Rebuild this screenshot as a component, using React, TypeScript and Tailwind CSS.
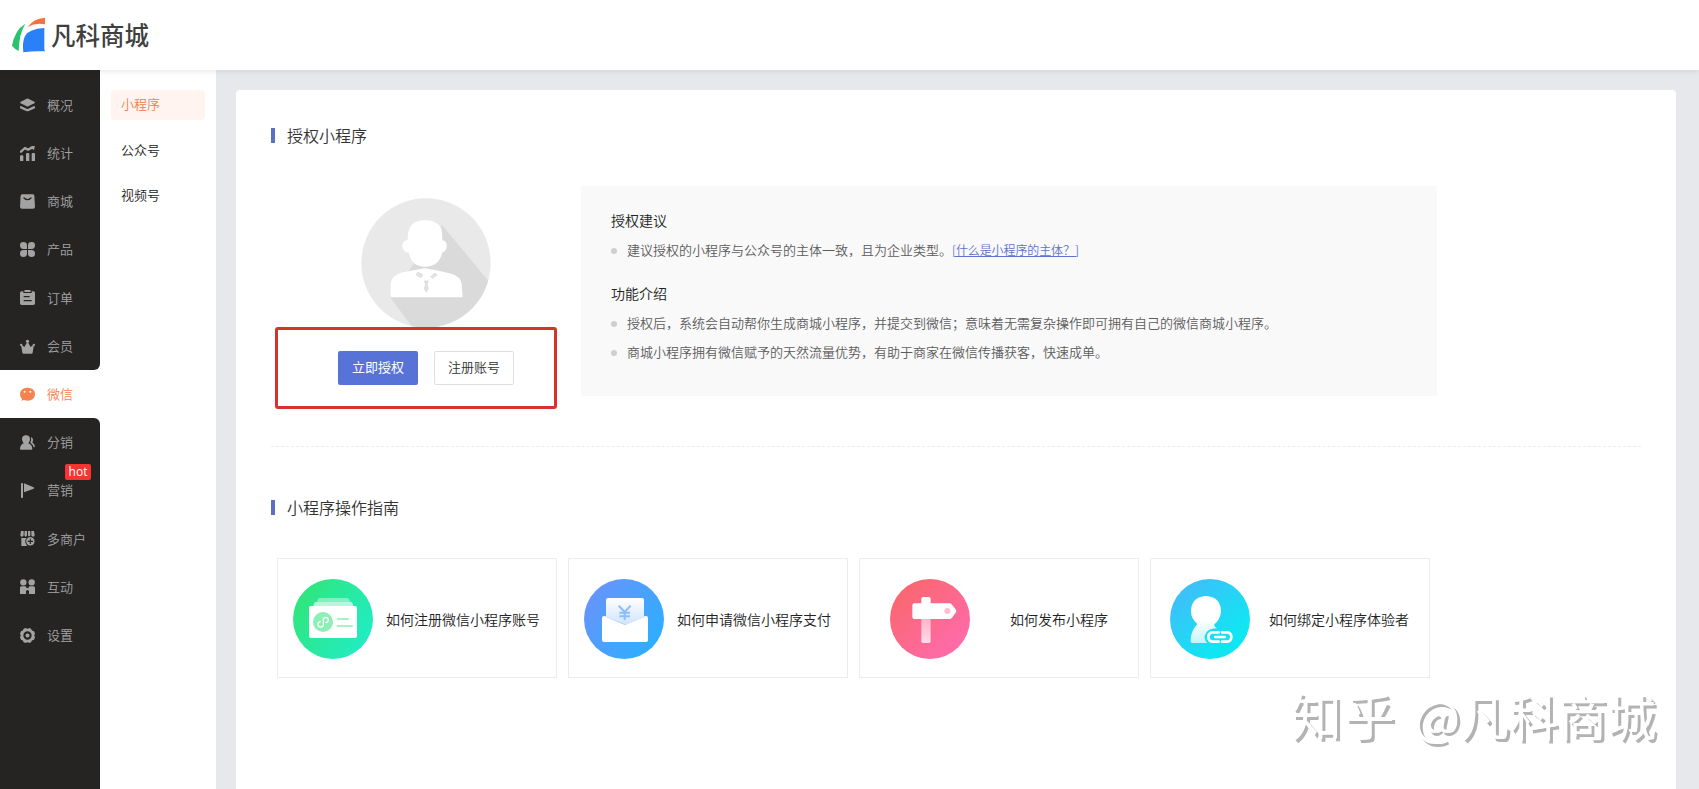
import type { ReactNode } from "react";

type NavItem = {
  label: string;
  icon: ReactNode;
  badge?: string;
};

const topNav: NavItem[] = [
  {
    label: "概况",
    icon: (
      <>
        <path d="M20 2 Q22.500 1 25 2 L43 11 Q46 14 43 16 L25 25 Q22.500 26 20 25 L2 16 Q-1 14 2 11Z" />
        <path d="M3 28 L20 36 Q22.500 37 25 36 L42 28" fill="none" stroke="currentColor" strokeWidth="7" strokeLinecap="round" />
      </>
    ),
  },
  {
    label: "统计",
    icon: (
      <>
        <path d="M3 17 L15 6 L24 11 L40 3" fill="none" stroke="currentColor" strokeWidth="7" strokeLinecap="round" strokeLinejoin="round" />
        <path d="M30 2 L44 0 L42 13Z" />
        <rect x="0" y="28" width="10" height="18" rx="3" />
        <rect x="18" y="21" width="10" height="25" rx="3" />
        <rect x="35" y="21" width="10" height="25" rx="3" />
      </>
    ),
  },
  {
    label: "商城",
    icon: (
      <>
        <path d="M7 1 H38 Q42 1 43 5 L45 38 Q45 44 39 44 H6 Q0 44 0 38 L2 5 Q3 1 7 1Z" />
        <path d="M12 12 Q22.500 22 33 12" fill="none" stroke="#252423" strokeWidth="4" strokeLinecap="round" />
      </>
    ),
  },
  {
    label: "产品",
    icon: (
      <>
        <path d="M10 0 Q21 0 21 10 V21 H10 Q0 21 0 10 Q0 0 10 0Z" />
        <path d="M35 0 Q45 0 45 10 Q45 21 35 21 H24 V10 Q24 0 35 0Z" />
        <path d="M10 24 H21 V35 Q21 45 10 45 Q0 45 0 35 Q0 24 10 24Z" />
        <path d="M24 24 H35 Q45 24 45 35 Q45 45 35 45 Q24 45 24 35Z" />
      </>
    ),
  },
  {
    label: "订单",
    icon: (
      <>
        <path d="M5 4 H10 V9 H35 V4 H40 Q45 4 45 9 V40 Q45 45 40 45 H5 Q0 45 0 40 V9 Q0 4 5 4Z" />
        <rect x="13" y="0" width="19" height="6" rx="2" />
        <path d="M11 20 H29 M11 32 H35" stroke="#252423" strokeWidth="4" />
      </>
    ),
  },
  {
    label: "会员",
    icon: (
      <>
        <path d="M3 16 L13 24 L20 12 H25 L32 24 L42 16 L38 41 Q37 44 34 44 H11 Q8 44 7 41Z" />
        <circle cx="22.500" cy="7" r="5" />
        <circle cx="3.500" cy="18" r="3.500" />
        <circle cx="41.500" cy="18" r="3.500" />
      </>
    ),
  },
];

const activeNav: NavItem = {
  label: "微信",
  icon: (
    <>
      <path d="M22 2 Q45 3 45 22 Q44 41 22 41 L11 39 L5 42 L6 36 Q0 30 0 22 Q1 3 22 2Z" />
      <circle cx="14" cy="14" r="3" fill="#fff" />
      <circle cx="31" cy="14" r="3" fill="#fff" />
    </>
  ),
};

const bottomNav: NavItem[] = [
  {
    label: "分销",
    icon: (
      <>
        <path d="M18 1 Q30 1 30 13 Q30 20 25 25 Q36 29 37 41 Q37 44 34 44 H3 Q0 44 0 41 Q1 29 11 25 Q6 20 6 13 Q6 1 18 1Z" />
        <path d="M33 6 Q43 11 37 22 Q45 28 44 37 H41 Q39 28 31 23 Q35 16 33 6Z" />
      </>
    ),
  },
  {
    label: "营销",
    badge: "hot",
    icon: (
      <>
        <rect x="3" y="0" width="6" height="45" rx="2" />
        <path d="M12 1 L41 13 Q43 15 41 17 L12 28Z" />
      </>
    ),
  },
  {
    label: "多商户",
    icon: (
      <>
        <path d="M3 0 H11 V13 Q10 17 6 17 Q1 17 1 13Z M14 0 H21 V13 Q20 17 17 17 Q14 17 13 13Z M24 0 H31 V13 Q30 17 27 17 Q24 17 24 13Z M34 0 H42 L44 13 Q44 17 39 17 Q35 17 34 13Z" />
        <path d="M4 21 H41 V25 H26 Q17 28 18 38 L21 45 H4Z" />
        <circle cx="31" cy="31" r="14" stroke="#252423" strokeWidth="3" />
        <path d="M31 23 V39 M23 31 H39" stroke="#252423" strokeWidth="3.500" />
      </>
    ),
  },
  {
    label: "互动",
    icon: (
      <>
        <circle cx="10" cy="10" r="9.500" />
        <circle cx="35" cy="10" r="9.500" />
        <path d="M4 22 H17 Q19 28 22.500 28 Q26 28 28 22 H41 Q45 22 45 27 V45 H27 V36 Q22.500 30 18 36 V45 H0 V27 Q0 22 4 22Z" />
      </>
    ),
  },
  {
    label: "设置",
    icon: (
      <>
        <path
          fillRule="evenodd"
          d="M17 0 Q22.500 4 28 0 L33 2 Q34 9 42 10 L45 17 Q40 22.500 45 28 L42 35 Q34 36 33 43 L28 45 Q22.500 41 17 45 L11 43 Q10 36 3 35 L0 28 Q5 22.500 0 17 L3 10 Q10 9 11 2Z M22.500 10 A12.500 12.500 0 1 0 22.500 35 A12.500 12.500 0 1 0 22.500 10Z"
        />
        <circle cx="22.500" cy="22.500" r="6" />
      </>
    ),
  },
];

const subNav = ["小程序", "公众号", "视频号"];

function Logo() {
  return (
    <svg viewBox="36 51 102 108" className="w-[34px] h-9">
      <path d="M36 137 Q44 90 76 71 Q57 101 56 153 Q44 147 36 137Z" fill="#27c46c" />
      <path d="M83 81 Q100 56 135 53 V73 Q106 68 83 81Z" fill="#f5713c" />
      <path d="M70 157 Q66 126 75 108 Q82 96 94 92 Q110 85 133 84 V150 L136 154 Q100 152 70 157Z" fill="#2a80f6" />
    </svg>
  );
}

function SideItem({ item, active }: { item: NavItem; active?: boolean }) {
  return (
    <div
      className={
        active
          ? "relative flex h-[48.2px] shrink-0 items-center gap-3 pl-5 text-[13px] text-[#f5834f]"
          : "relative flex h-[48.2px] shrink-0 items-center gap-3 pl-5 text-[13px] text-[#a3a3a3]"
      }
    >
      <svg viewBox="0 0 45 45" fill="currentColor" className="size-[15px] shrink-0">
        {item.icon}
      </svg>
      <span className="pb-px whitespace-nowrap">{item.label}</span>
      {item.badge && (
        <span className="absolute left-[65px] -top-[3px] flex h-4 w-[26px] items-center justify-center rounded-[2px] bg-[#f43530] font-['Open_Sans'] text-xs leading-none font-medium text-white">
          {item.badge}
        </span>
      )}
    </div>
  );
}

function SectionTitle({ children }: { children: ReactNode }) {
  return (
    <div className="flex h-6 items-center gap-3 pb-0.5">
      <span className="h-[15px] w-1 bg-[#5b70c0]" />
      <h2 className="text-base leading-6 text-[#333]">{children}</h2>
    </div>
  );
}

function Avatar() {
  return (
    <svg viewBox="0 0 390 390" className="size-[130px]">
      <defs>
        <clipPath id="avatar-clip">
          <circle cx="195" cy="195" r="194" />
        </clipPath>
      </defs>
      <circle cx="195" cy="195" r="194" fill="#e9e9e9" />
      <path d="M242 80 L400 270 V400 H164 L87 298Z" fill="#dadada" clipPath="url(#avatar-clip)" />
      <path
        d="M140 125 Q139 67 190 67 Q218 66 234 82 Q244 86 244 127 Q258 128 257 145 Q255 163 243 164 Q236 205 192 206 Q151 206 144 164 Q127 163 124 146 Q122 129 140 125Z"
        fill="#fff"
      />
      <path d="M89 298 V258 Q92 231 126 223 L166 215 L192 211 L218 215 L266 226 Q300 235 302 259 L305 298Z" fill="#fff" />
      <g fill="#e4e4e4" stroke="#d3d3d3" strokeWidth="2">
        <path d="M170 223 L185 230 L180 239 L166 231Z" />
        <path d="M222 225 L228 231 L215 241 L209 236Z" />
        <path d="M190 249 H202 L198 258 L202 272 L196 282 L190 272 L194 258Z" />
      </g>
    </svg>
  );
}

function Bullet({ children }: { children: ReactNode }) {
  return (
    <li className="flex h-[29px] items-center gap-2.5 text-[13px] whitespace-nowrap text-[#5c5c5c]">
      <span className="size-1.5 rounded-full bg-[#cfcfcf]" />
      <span className="pb-0.5">{children}</span>
    </li>
  );
}

function RegisterIcon() {
  return (
    <svg viewBox="0 0 240 240" className="size-20 shrink-0">
      <linearGradient id="g-register" x1="0" y1="0.200" x2="1" y2="0.800">
        <stop stopColor="#30e678" />
        <stop offset="1" stopColor="#21ecc8" />
      </linearGradient>
      <circle cx="120" cy="120" r="120" fill="url(#g-register)" />
      <path d="M80 57 H162 Q168 57 171 69 H72 Q75 57 80 57Z" fill="#fff" opacity="0.400" />
      <path d="M68 69 H174 Q179 70 181 81 H61 Q63 70 68 69Z" fill="#fff" opacity="0.650" />
      <rect x="48" y="81" width="144" height="96" rx="6" fill="#fff" />
      <circle cx="90" cy="129" r="30" fill="#8cefb4" />
      <path d="M91 118 V139 Q89 145 81 144 Q73 141 75 133 Q77 129 82 128 M91 138 V122 Q92 115 99 115 Q107 117 106 125 Q104 130 99 131" fill="none" stroke="#fff" strokeWidth="4" strokeLinecap="round" />
      <path d="M133 120 H166 M133 141 H178" stroke="#8cefb4" strokeWidth="5" strokeLinecap="round" />
    </svg>
  );
}

function PayIcon() {
  return (
    <svg viewBox="0 0 240 240" className="size-20 shrink-0">
      <linearGradient id="g-pay" x1="0.100" y1="0.200" x2="0.900" y2="0.800">
        <stop stopColor="#6595fb" />
        <stop offset="1" stopColor="#2eaeff" />
      </linearGradient>
      <linearGradient id="g-paper" x1="0" y1="0" x2="0" y2="1">
        <stop stopColor="#fff" />
        <stop offset="1" stopColor="#cfe3ff" />
      </linearGradient>
      <circle cx="120" cy="120" r="120" fill="url(#g-pay)" />
      <path d="M72 57 H174 Q180 57 180 63 V114 L126 138 L66 114 V63 Q66 57 72 57Z" fill="url(#g-paper)" />
      <path d="M104 80 L122 99 L140 80 M122 99 V123 M106 101 H138 M106 112 H138" fill="none" stroke="#8bbcfb" strokeWidth="6" />
      <path d="M60 111 Q66 111 68 115 L124 138 L178 115 Q181 111 186 111 Q192 111 192 117 V183 Q192 189 186 189 H60 Q54 189 54 183 V117 Q54 111 60 111Z" fill="#fff" />
    </svg>
  );
}

function PublishIcon() {
  return (
    <svg viewBox="0 0 240 240" className="size-20 shrink-0">
      <linearGradient id="g-publish" x1="0.100" y1="0.150" x2="0.800" y2="0.900">
        <stop stopColor="#f9676f" />
        <stop offset="1" stopColor="#ff6ba9" />
      </linearGradient>
      <linearGradient id="g-pole" x1="0" y1="0" x2="0" y2="1">
        <stop stopColor="#ffb3cb" />
        <stop offset="1" stopColor="#ffdbe8" />
      </linearGradient>
      <circle cx="120" cy="120" r="120" fill="url(#g-publish)" />
      <path d="M94 120 H122 V187 Q122 192 117 192 H99 Q94 192 94 187Z" fill="url(#g-pole)" />
      <path d="M94 73 V60 Q94 54 100 54 H116 Q122 54 122 60 V73 H178 Q183 73 186 77 L198 92 Q200 96 198 100 L186 116 Q183 120 178 120 H73 Q67 120 67 114 V79 Q67 73 73 73Z" fill="#fff" />
      <circle cx="172" cy="96" r="9" fill="#fdc0d0" />
    </svg>
  );
}

function BindIcon() {
  return (
    <svg viewBox="0 0 240 240" className="size-20 shrink-0">
      <linearGradient id="g-bind" x1="0.100" y1="0.100" x2="0.700" y2="0.800">
        <stop stopColor="#42bcf9" />
        <stop offset="1" stopColor="#10e6f2" />
      </linearGradient>
      <linearGradient id="g-person" x1="0" y1="0" x2="0" y2="1">
        <stop offset="0.500" stopColor="#fff" />
        <stop offset="1" stopColor="#c4f5fb" />
      </linearGradient>
      <circle cx="120" cy="120" r="120" fill="url(#g-bind)" />
      <path
        d="M108 51 Q152 53 153 97 Q152 121 132 137 Q134 145 141 148 Q112 147 104 170 Q103 184 112 192 H67 Q61 192 62 184 Q62 157 82 135 Q63 120 63 97 Q64 53 108 51Z"
        fill="url(#g-person)"
      />
      <path d="M146 160 H128 Q115 161 115 174 Q115 187 128 188 H146 M156 160 H171 Q184 161 184 174 Q184 187 171 188 H156 M136 174 H164" fill="none" stroke="#fff" strokeWidth="8" strokeLinecap="round" />
    </svg>
  );
}

const guides = [
  { title: "如何注册微信小程序账号", icon: <RegisterIcon />, layout: "gap-[13px] pl-[15px]" },
  { title: "如何申请微信小程序支付", icon: <PayIcon />, layout: "gap-[13px] pl-[15px]" },
  { title: "如何发布小程序", icon: <PublishIcon />, layout: "gap-10 pl-[30px]" },
  { title: "如何绑定小程序体验者", icon: <BindIcon />, layout: "gap-[19px] pl-[19px]" },
];

export default function App() {
  return (
    <div className="relative flex h-[789px] w-full flex-col overflow-hidden bg-white font-['Noto_Sans_CJK_SC',sans-serif] font-[350]">
      <header className="relative z-10 flex h-[70px] shrink-0 items-center gap-[5px] bg-white pl-3 shadow-[0_1px_6px_rgba(0,0,0,0.1)]">
        <Logo />
        <h1 className="text-[24.5px] leading-none font-medium text-[#3f3f3f]">凡科商城</h1>
      </header>

      <div className="flex min-h-0 flex-1">
        <aside className="flex w-[100px] shrink-0 flex-col">
          <nav className="rounded-br-md bg-[#252423] pt-[11px]">
            {topNav.map((item) => (
              <SideItem key={item.label} item={item} />
            ))}
          </nav>
          <SideItem item={activeNav} active />
          <nav className="flex-1 rounded-tr-md bg-[#252423]">
            {bottomNav.map((item) => (
              <SideItem key={item.label} item={item} />
            ))}
          </nav>
        </aside>

        <aside className="flex w-[116px] shrink-0 flex-col gap-[15px] px-[11px] pt-5 text-[13px]">
          {subNav.map((label, i) => (
            <div
              key={label}
              className={
                i === 0
                  ? "flex h-[30px] items-center rounded bg-[#fff4ef] pb-0.5 pl-2.5 text-[#ed8150]"
                  : "flex h-[30px] items-center pb-px pl-2.5 text-[#222]"
              }
            >
              {label}
            </div>
          ))}
        </aside>

        <main className="flex-1 bg-[#e7e8ec] pt-5 pr-[23px] pl-5">
          <div className="h-full rounded-t bg-white px-[35px] pt-[34px]">
            <SectionTitle>授权小程序</SectionTitle>

            <div className="mt-[38px] flex">
              <div className="relative flex w-[310px] flex-col items-center pt-3">
                <Avatar />
                <div className="mt-[23px] flex gap-4 text-[13px]">
                  <button className="h-[34px] w-20 rounded-[2px] bg-[#5873d8] pb-0.5 font-normal text-white">立即授权</button>
                  <button className="h-[34px] w-20 rounded-[2px] border border-[#e0e0e0] bg-white pb-0.5 text-[#333]">
                    注册账号
                  </button>
                </div>
                <div className="absolute top-[141px] left-1 h-[82px] w-[282px] rounded-[3px] border-3 border-[#d6332a]" />
              </div>

              <div className="h-[210px] w-[856px] bg-[#f9f9f9] pt-[23px] pl-[30px]">
                <h3 className="text-sm leading-[22px] text-[#222]">授权建议</h3>
                <ul className="mt-[5px]">
                  <Bullet>
                    建议授权的小程序与公众号的主体一致，且为企业类型。
                    <a href="#" className="text-xs tracking-[-0.1px] text-[#5b74cc] underline">
                      [什么是小程序的主体？]
                    </a>
                  </Bullet>
                </ul>
                <h3 className="mt-[17px] text-sm leading-[22px] text-[#222]">功能介绍</h3>
                <ul className="mt-[5px]">
                  <Bullet>授权后，系统会自动帮你生成商城小程序，并提交到微信；意味着无需复杂操作即可拥有自己的微信商城小程序。</Bullet>
                  <Bullet>商城小程序拥有微信赋予的天然流量优势，有助于商家在微信传播获客，快速成单。</Bullet>
                </ul>
              </div>
            </div>

            <div className="mt-[50px] mb-[49px] border-t border-dashed border-[#ececec]" />

            <SectionTitle>小程序操作指南</SectionTitle>

            <div className="mt-[38px] ml-1.5 flex gap-[11px]">
              {guides.map((g) => (
                <div key={g.title} className="h-[120px] w-[280px] border border-[#ececec]">
                  <div className={`flex h-full items-center pt-0.5 ${g.layout}`}>
                    {g.icon}
                    <span className="text-sm whitespace-nowrap text-[#222]">{g.title}</span>
                  </div>
                </div>
              ))}
            </div>
          </div>
        </main>
      </div>

      <div className="absolute right-[43px] bottom-[49px] flex items-baseline text-[49px] leading-none font-normal whitespace-nowrap text-white [text-shadow:3px_3px_0_#b3b3b3]">
        <span className="mr-[17px] text-[51px] tracking-[2px]">知乎</span>
        <span>@凡科商城</span>
      </div>
    </div>
  );
}
